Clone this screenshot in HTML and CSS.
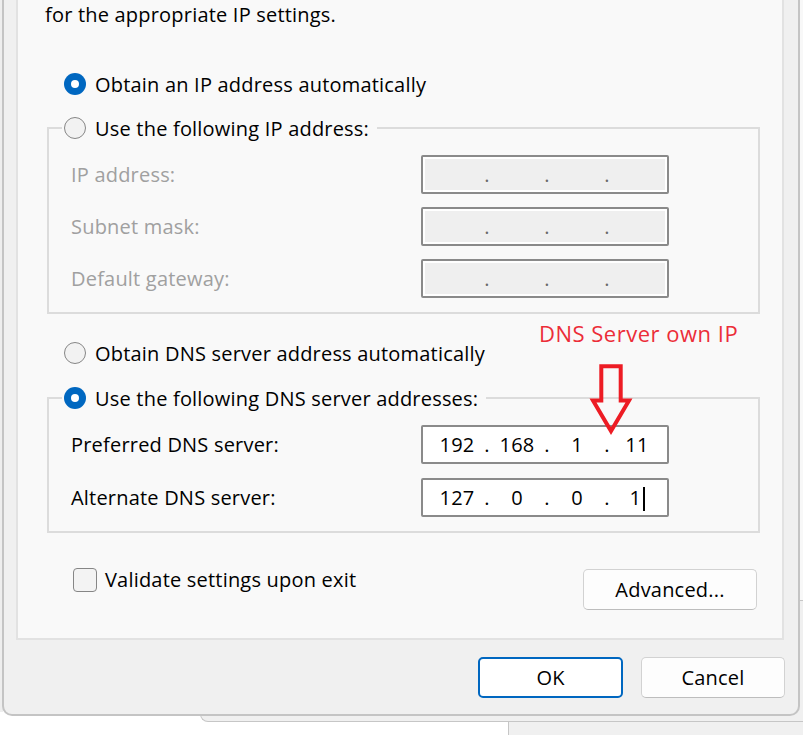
FILE: index.html
```html
<!DOCTYPE html>
<html lang="en">
<head>
<meta charset="utf-8">
<title>Internet Protocol Version 4 (TCP/IPv4) Properties</title>
<link rel="stylesheet" href="styles.css">
</head>
<body>
  <div class="bgwin bgwin-left"></div>
  <div class="bgwin bgwin-right"></div>
  <div class="bgwin bgwin-under"></div>
  <div class="bgwin bgwin-under2"></div>

  <div class="dialog">
    <div class="panel">
      <p class="intro">for the appropriate IP settings.</p>

      <div class="opt opt-ip-auto">
        <span class="radio on"></span><span>Obtain an IP address automatically</span>
      </div>

      <div class="group group-ip">
        <div class="legend">
          <span class="radio"></span><span>Use the following IP address:</span>
        </div>
        <div class="frow frow-first">
          <span class="lbl dis">IP address:</span>
          <div class="ipf dis"><span class="seg"></span><span class="dot">.</span><span class="seg"></span><span class="dot">.</span><span class="seg"></span><span class="dot">.</span><span class="seg"></span></div>
        </div>
        <div class="frow">
          <span class="lbl dis">Subnet mask:</span>
          <div class="ipf dis"><span class="seg"></span><span class="dot">.</span><span class="seg"></span><span class="dot">.</span><span class="seg"></span><span class="dot">.</span><span class="seg"></span></div>
        </div>
        <div class="frow">
          <span class="lbl dis">Default gateway:</span>
          <div class="ipf dis"><span class="seg"></span><span class="dot">.</span><span class="seg"></span><span class="dot">.</span><span class="seg"></span><span class="dot">.</span><span class="seg"></span></div>
        </div>
      </div>

      <div class="opt opt-dns-auto">
        <span class="radio"></span><span>Obtain DNS server address automatically</span>
      </div>

      <div class="group group-dns">
        <div class="legend">
          <span class="radio on"></span><span>Use the following DNS server addresses:</span>
        </div>
        <div class="frow frow-first">
          <span class="lbl">Preferred DNS server:</span>
          <div class="ipf"><span class="seg">192</span><span class="dot">.</span><span class="seg">168</span><span class="dot">.</span><span class="seg">1</span><span class="dot">.</span><span class="seg">11</span></div>
        </div>
        <div class="frow frow-second">
          <span class="lbl">Alternate DNS server:</span>
          <div class="ipf"><span class="seg">127</span><span class="dot">.</span><span class="seg">0</span><span class="dot">.</span><span class="seg">0</span><span class="dot">.</span><span class="seg">1<span class="caret"></span></span></div>
        </div>
      </div>

      <div class="bottom-row">
        <label class="check-wrap"><span class="checkbox"></span><span>Validate settings upon exit</span></label>
        <button class="btn adv" type="button">Advanced...</button>
      </div>
    </div>

    <div class="buttons">
      <button class="btn ok" type="button">OK</button>
      <button class="btn cancel" type="button">Cancel</button>
    </div>
  </div>

  <div class="note">DNS Server own IP</div>
  <svg class="arrow" width="50" height="80" viewBox="0 0 50 80" aria-hidden="true">
    <polygon points="15.3,6.3 34.7,6.3 34.7,40.5 43,40.5 25,71 7,40.5 15.3,40.5" fill="none" stroke="#ed1c24" stroke-width="4" stroke-linejoin="miter"/>
  </svg>
</body>
</html>
```

FILE: styles.css
```css
html, body {
  margin: 0;
  padding: 0;
}

body {
  position: relative;
  width: 803px;
  height: 735px;
  overflow: hidden;
  background: #ffffff;
  font-family: "Open Sans", "Noto Sans", "DejaVu Sans", sans-serif;
  font-size: 20px;
  letter-spacing: 0.2px;
  color: #000;
}

/* windows behind the dialog */
.bgwin {
  position: absolute;
  z-index: 0;
  box-sizing: border-box;
}
.bgwin-left {
  left: 0;
  top: 0;
  width: 3px;
  height: 712px;
  background: #eeeeee;
}
.bgwin-right {
  left: 798px;
  top: 0;
  width: 5px;
  height: 716px;
  background: #f8f8f8;
}
.bgwin-under {
  left: 200px;
  top: 600px;
  width: 603px;
  height: 122px;
  border: 1px solid #c6c6c6;
  border-right: none;
  border-radius: 0 0 0 8px;
  background: #f0f0f0;
}
.bgwin-under2 {
  left: 508px;
  top: 722px;
  width: 295px;
  height: 13px;
  border-left: 1px solid #c6c6c6;
  background: #f0f0f0;
}

/* dialog */
.dialog {
  position: relative;
  z-index: 2;
  box-sizing: border-box;
  width: 798px;
  margin-left: 2px;
  background: #f0f0f0;
  border: 2px solid #c4c4c4;
  border-top: none;
  border-radius: 0 0 10px 10px;
  padding: 0 0 16px 12px;
}

.panel {
  margin-right: 14px;
  background: #f9f9f9;
  border: 2px solid #e2e2e2;
  border-top: none;
  padding: 3px 22px 28px 29px;
}

.intro {
  margin: 0 0 0 -2px;
  height: 24px;
  line-height: 24px;
  white-space: nowrap;
}

.opt {
  display: flex;
  align-items: center;
  gap: 9px;
  height: 26px;
  padding-left: 17px;
  white-space: nowrap;
}
.opt-ip-auto { margin-top: 44px; }
.opt-dns-auto { margin-top: 26px; }

/* radios & checkbox */
.radio {
  position: relative;
  box-sizing: border-box;
  flex: none;
  width: 22px;
  height: 22px;
  border-radius: 50%;
  border: 1.5px solid #868686;
  background: #f2f2f2;
}
.radio.on {
  border: none;
  background: #0067c0;
}
.radio.on::after {
  content: "";
  position: absolute;
  left: 7px;
  top: 7px;
  width: 8px;
  height: 8px;
  border-radius: 50%;
  background: #ffffff;
}

.checkbox {
  box-sizing: border-box;
  flex: none;
  width: 24px;
  height: 24px;
  border: 1.5px solid #868686;
  border-radius: 4px;
  background: #f3f3f3;
}

/* group boxes */
.group {
  border: 2px solid #dcdcdc;
  padding: 0 0 14px 22px;
}
.group-ip { margin-top: 30px; }
.group-dns { margin-top: 31px; }

.legend {
  display: flex;
  align-items: center;
  gap: 9px;
  width: max-content;
  height: 26px;
  margin: -14px 0 0 -9px;
  padding: 0 8px 0 2px;
  background: #f9f9f9;
  white-space: nowrap;
}

.frow {
  display: flex;
  align-items: center;
  height: 39px;
  margin-top: 13px;
}
.frow-first { margin-top: 14px; }
.frow-second { margin-top: 14px; }

.lbl {
  width: 350px;
  flex: none;
  white-space: nowrap;
}
.lbl.dis { color: #a0a0a0; }

/* IP address fields */
.ipf {
  box-sizing: border-box;
  display: flex;
  align-items: center;
  width: 248px;
  height: 39px;
  padding-left: 8px;
  border: 2px solid #8a8a8a;
  border-radius: 2px;
  background: #ffffff;
}
.ipf.dis {
  background: #efefef;
  box-shadow: inset 0 0 0 2px #ffffff;
}
.seg {
  width: 52px;
  text-align: center;
  white-space: nowrap;
}
.dot {
  width: 8px;
  text-align: center;
}
.ipf.dis .dot { color: #6a6a6a; }

.caret {
  display: inline-block;
  width: 1.5px;
  height: 24px;
  margin-left: 2px;
  background: #000;
  vertical-align: -6px;
}

/* bottom row */
.bottom-row {
  display: flex;
  justify-content: space-between;
  align-items: flex-start;
  margin-top: 34px;
}
.check-wrap {
  display: flex;
  align-items: center;
  gap: 8px;
  height: 25px;
  padding-left: 26px;
  white-space: nowrap;
}

.btn {
  box-sizing: border-box;
  display: flex;
  align-items: center;
  justify-content: center;
  height: 41px;
  padding: 0;
  border: 1px solid #d2d2d2;
  border-bottom-color: #bdbdbd;
  border-radius: 5px;
  background: #fdfdfd;
  font: inherit;
  letter-spacing: inherit;
  color: #000;
}
.adv {
  width: 174px;
  margin-top: 2px;
  margin-right: 3px;
}

.buttons {
  display: flex;
  justify-content: flex-end;
  gap: 18px;
  margin-top: 17px;
  padding-right: 13px;
}
.ok {
  width: 145px;
  border: 2px solid #0067c0;
  background: #ffffff;
}
.cancel {
  width: 144px;
}

/* annotation */
.note {
  position: absolute;
  z-index: 3;
  left: 539px;
  top: 318px;
  font-size: 22px;
  line-height: 30px;
  letter-spacing: 0.5px;
  color: #ec2d38;
  white-space: nowrap;
}
.arrow {
  position: absolute;
  z-index: 3;
  left: 586px;
  top: 360px;
}
```
